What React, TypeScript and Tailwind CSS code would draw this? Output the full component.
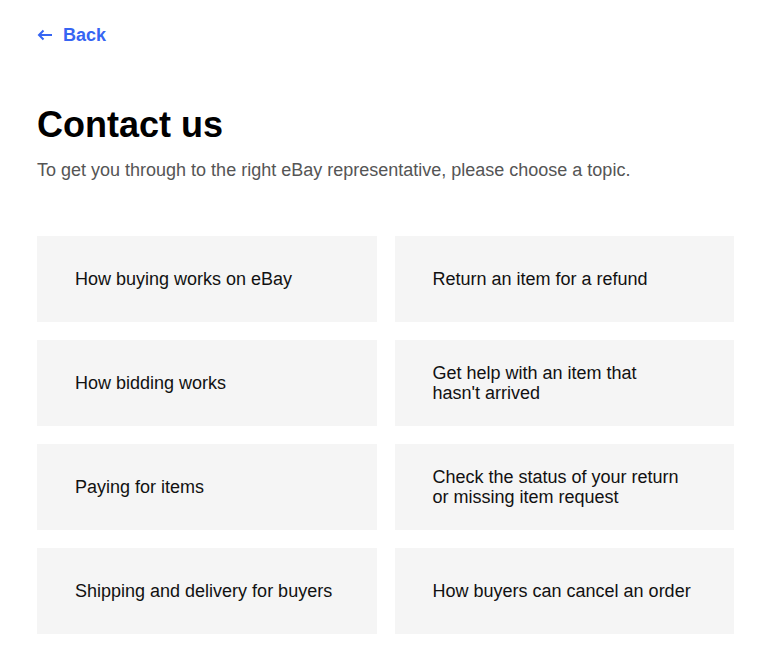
import React from 'react';

const topics = [
  ["How buying works on eBay"],
  ["Return an item for a refund"],
  ["How bidding works"],
  ["Get help with an item that", "hasn't arrived"],
  ["Paying for items"],
  ["Check the status of your return", "or missing item request"],
  ["Shipping and delivery for buyers"],
  ["How buyers can cancel an order"],
];

const App = () => {
  return (
    <div className="min-h-screen bg-white pl-[37px] pr-[34px] pt-[24px] font-['Liberation_Sans',Arial,sans-serif] text-black">
      <a href="#" className="inline-flex items-center gap-[10px] text-[18px] font-bold leading-[22px] text-[#3665f3]">
        <svg width="16" height="12" viewBox="0 0 16 12" fill="none" stroke="currentColor" strokeWidth="2">
          <path d="M15 6H2M6.5 1.5 2 6l4.5 4.5" />
        </svg>
        Back
      </a>

      <h1 className="mt-[57px] text-[36px] font-bold leading-[40px]">Contact us</h1>
      <p className="mt-[14px] text-[18px] leading-[22px] text-[#555]">
        To get you through to the right eBay representative, please choose a topic.
      </p>

      <div className="mt-[55px] grid grid-cols-2 gap-x-[18px] gap-y-[18px]">
        {topics.map((lines, index) => (
          <a
            key={index}
            href="#"
            className="flex h-[86px] items-center bg-[#f5f5f5] pl-[38px] pr-[24px] text-[18px] leading-[20px] text-[#111]"
          >
            <span>
              {lines.map((line, i) => (
                <span key={i} className="block">{line}</span>
              ))}
            </span>
          </a>
        ))}
      </div>
    </div>
  );
};

export default App;
